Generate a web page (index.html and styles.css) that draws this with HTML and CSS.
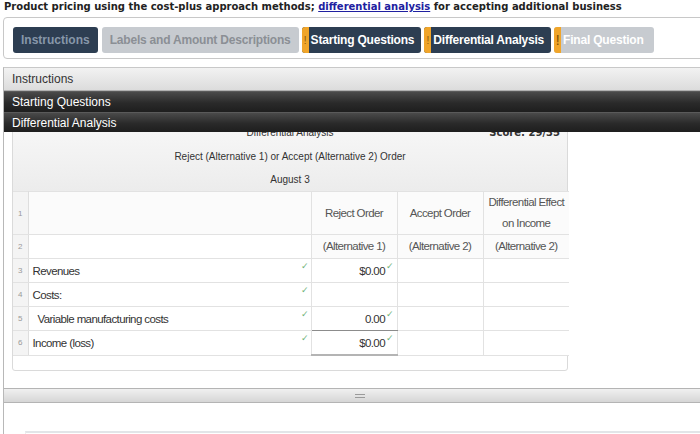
FILE: index.html
```html
<!DOCTYPE html>
<html lang="en">
<head>
<meta charset="UTF-8">
<title>Differential Analysis</title>
<link rel="stylesheet" href="styles.css">
</head>
<body>

<h1 class="title">Product pricing using the cost-plus approach methods; <a href="#">differential analysis</a> for accepting additional business</h1>

<div class="tabbar">
  <div class="tab dark muted">Instructions</div>
  <div class="tab light">Labels and Amount Descriptions</div>
  <div class="tab dark"><span class="flag">!</span><span class="label">Starting Questions</span></div>
  <div class="tab dark"><span class="flag">!</span><span class="label">Differential Analysis</span></div>
  <div class="tab light white"><span class="flag">!</span><span class="label">Final Question</span></div>
</div>

<div class="panel">
  <div class="acc-head acc-light">Instructions</div>
  <div class="acc-head acc-dark">Starting Questions</div>
  <div class="acc-head acc-dark">Differential Analysis</div>

  <div class="pane">
    <div class="sheet">
      <div class="sheet-head">
        <div class="head-line first">
          <span></span>
          <span>Differential Analysis</span>
          <span class="score">Score: 29/35</span>
        </div>
        <div class="head-line">Reject (Alternative 1) or Accept (Alternative 2) Order</div>
        <div class="head-line">August 3</div>
      </div>

      <table class="grid">
        <colgroup>
          <col class="c-num"><col class="c-label"><col class="c-val"><col class="c-val"><col class="c-val">
        </colgroup>
        <tr class="r-tall">
          <td class="num">1</td><td></td>
          <td class="hd">Reject Order</td>
          <td class="hd">Accept Order</td>
          <td class="hd">Differential Effect<br>on Income</td>
        </tr>
        <tr>
          <td class="num">2</td><td></td>
          <td class="hd">(Alternative 1)</td>
          <td class="hd">(Alternative 2)</td>
          <td class="hd">(Alternative 2)</td>
        </tr>
        <tr>
          <td class="num">3</td>
          <td><div class="lbl"><span>Revenues</span><span class="chk">&#10003;</span></div></td>
          <td><div class="val"><span>$0.00</span><span class="chk">&#10003;</span></div></td>
          <td></td><td></td>
        </tr>
        <tr>
          <td class="num">4</td>
          <td><div class="lbl"><span>Costs:</span><span class="chk">&#10003;</span></div></td>
          <td></td><td></td><td></td>
        </tr>
        <tr>
          <td class="num">5</td>
          <td><div class="lbl"><span class="indent">Variable manufacturing costs</span><span class="chk">&#10003;</span></div></td>
          <td class="single"><div class="val"><span>0.00</span><span class="chk">&#10003;</span></div></td>
          <td></td><td></td>
        </tr>
        <tr>
          <td class="num">6</td>
          <td><div class="lbl"><span>Income (loss)</span><span class="chk">&#10003;</span></div></td>
          <td class="double"><div class="val"><span>$0.00</span><span class="chk">&#10003;</span></div></td>
          <td></td><td></td>
        </tr>
      </table>
    </div>
  </div>

  <div class="splitter"><span class="grip"></span></div>

  <div class="lower">
    <div class="lower-box"></div>
  </div>
</div>

</body>
</html>
```

FILE: styles.css
```css
body {
  margin: 0;
  width: 700px;
  height: 434px;
  overflow: hidden;
  font-family: "Liberation Sans", Arial, sans-serif;
  color: #333;
  background: #fff;
}

.title {
  margin: 0;
  padding: 0 0 0 4px;
  height: 17px;
  font-family: "DejaVu Sans", Verdana, sans-serif;
  font-size: 10px;
  line-height: 14px;
  font-weight: bold;
  color: #222;
  white-space: nowrap;
}

.title a { color: #2020a0; }

.tabbar {
  display: flex;
  gap: 3px;
  margin-left: 3px;
  width: 760px;
  height: 42px;
  padding: 9px 0 0 9px;
  box-sizing: border-box;
  border: 1px solid #c8c8c8;
  border-radius: 4px;
}

.tab {
  display: flex;
  align-items: center;
  height: 26px;
  border-radius: 3px;
  font-size: 12px;
  letter-spacing: -0.2px;
  font-weight: bold;
  white-space: nowrap;
  overflow: hidden;
}

.tab.muted, .tab.light { padding: 0 8px; }
.tab.muted { margin-right: 1px; letter-spacing: 0; }

.dark { background: #2d3e52; color: #fff; }
.muted { color: #8797a9; }
.light { background: #c7cbd0; color: #8b8f95; }
.white { color: #fff; }

.tab .flag {
  width: 7px;
  height: 100%;
  background: #f0a52a;
  color: #8a5a10;
  font-size: 10px;
  font-weight: normal;
  display: flex;
  align-items: center;
  justify-content: center;
}

.tab.light .flag { font-size: 14px; color: #7a4a00; }

.tab .label { padding: 0 7px 0 2px; }
.tab.light .label { padding-right: 10px; }
.tab.light:has(.flag) { padding: 0; }

.panel {
  margin: 8px 0 0 3px;
  border-left: 1px solid #b8b8b8;
  border-top: 1px solid #c8c8c8;
}

.acc-head {
  padding-left: 8px;
  font-size: 12px;
}

.acc-light {
  height: 22px;
  line-height: 23px;
  background: linear-gradient(#f2f2f2, #dcdcdc);
  border-bottom: 1px solid #b0b0b0;
  color: #333;
}

.acc-dark {
  height: 20px;
  line-height: 21px;
  background: linear-gradient(#4a4a4a, #2a2a2a 55%, #1e1e1e);
  border-top: 1px solid #5a5a5a;
  color: #fff;
}

.acc-dark + .acc-dark { height: 19px; line-height: 20px; }

.pane {
  height: 256px;
  overflow: hidden;
}

.sheet {
  width: 556px;
  margin: -11px 0 0 8px;
  box-sizing: border-box;
  border: 1px solid #dadada;
  border-radius: 3px;
  padding-bottom: 14px;
}

.sheet-head {
  background: linear-gradient(#f8f8f8, #ececec);
  font-size: 10px;
  color: #333;
  text-align: center;
}

.head-line {
  height: 23px;
  line-height: 23px;
}

.head-line.first {
  display: grid;
  grid-template-columns: 1fr auto 1fr;
  line-height: 21px;
}

.score {
  justify-self: end;
  padding-right: 7px;
  font-family: "DejaVu Sans", Verdana, sans-serif;
  font-weight: bold;
  font-size: 10px;
}

.grid {
  border-collapse: collapse;
  table-layout: fixed;
  width: 555px;
  font-family: "Liberation Sans", Arial, sans-serif;
  font-size: 11.5px;
  letter-spacing: -0.6px;
  color: #333;
}

.c-num { width: 15px; }
.c-label { width: 283px; }
.c-val { width: 86px; }

.grid td {
  height: 23px;
  padding: 0;
  border-right: 1px solid #e2e2e2;
  border-bottom: 1px solid #e2e2e2;
  vertical-align: middle;
  background: #fff;
}

.grid tr:first-child td { border-top: 1px solid #e2e2e2; }
.grid td:last-child { border-right: none; }
.grid .r-tall td { height: 41px; background: #fbfbfb; }

.grid td.num {
  background: #f4f4f4;
  border-right: 1px solid #dedede;
  color: #999;
  font-size: 8px;
  letter-spacing: 0;
  text-align: center;
}

.grid td.hd {
  text-align: center;
  color: #555;
  line-height: 21px;
  background: #fbfbfb;
}

.lbl {
  display: flex;
  justify-content: space-between;
  padding-left: 4px;
}

.indent { padding-left: 5px; }

.val {
  display: flex;
  justify-content: flex-end;
  padding-right: 1px;
}

.chk {
  color: #6fb37a;
  font-family: "DejaVu Sans", sans-serif;
  font-size: 9px;
  line-height: 9px;
  letter-spacing: 0;
  align-self: flex-start;
  margin-top: -3px;
  padding: 0 2px 0 1px;
}

.grid td.single { border-bottom: 1px solid #8c8c8c; }
.grid td.double { border-bottom: 2px solid #b4b4b4; }

.splitter {
  height: 13px;
  border-top: 1px solid #b4b4b4;
  border-bottom: 1px solid #b4b4b4;
  background: linear-gradient(#f0f0f0, #d6d6d6);
  display: flex;
  justify-content: center;
  align-items: center;
  padding-left: 16px;
}

.grip {
  width: 10px;
  height: 2px;
  border-top: 1px solid #9a9a9a;
  border-bottom: 1px solid #9a9a9a;
}

.lower {
  padding: 28px 0 0 21px;
}

.lower-box {
  height: 20px;
  border-top: 2px solid #e2e5e8;
  border-left: 1px solid #eee;
}
```
